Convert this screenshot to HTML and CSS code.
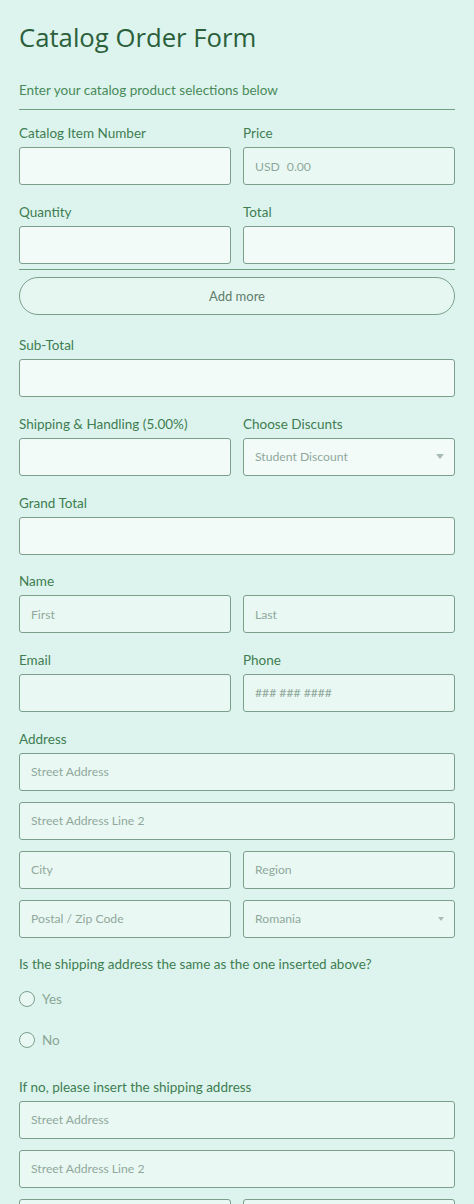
FILE: index.html
```html
<!DOCTYPE html>
<html>
<head>
<meta charset="utf-8">
<link rel="stylesheet" href="styles.css">
</head>
<body>
<div class="page">
  <header class="head">
    <h1 class="title">Catalog Order Form</h1>
    <p class="subtitle">Enter your catalog product selections below</p>
  </header>

  <div class="row two">
    <div class="field">
      <div class="label">Catalog Item Number</div>
      <div class="box white"></div>
    </div>
    <div class="field">
      <div class="label">Price</div>
      <div class="box mint"><span class="ph cur">USD</span><span class="ph">0.00</span></div>
    </div>
    <div class="field">
      <div class="label">Quantity</div>
      <div class="box white"></div>
    </div>
    <div class="field">
      <div class="label">Total</div>
      <div class="box white"></div>
    </div>
  </div>

  <div class="sep"></div>
  <div class="addmore">Add more</div>

  <div class="field single">
    <div class="label">Sub-Total</div>
    <div class="box white"></div>
  </div>

  <div class="row two">
    <div class="field">
      <div class="label">Shipping &amp; Handling (5.00%)</div>
      <div class="box white"></div>
    </div>
    <div class="field">
      <div class="label">Choose Discunts</div>
      <div class="box white select"><span class="ph">Student Discount</span><span class="caret"></span></div>
    </div>
  </div>

  <div class="field single">
    <div class="label">Grand Total</div>
    <div class="box white"></div>
  </div>

  <div class="field single">
    <div class="label">Name</div>
    <div class="pair">
      <div class="box mint"><span class="ph">First</span></div>
      <div class="box mint"><span class="ph">Last</span></div>
    </div>
  </div>

  <div class="row two">
    <div class="field">
      <div class="label">Email</div>
      <div class="box mint"></div>
    </div>
    <div class="field">
      <div class="label">Phone</div>
      <div class="box mint"><span class="ph">### ### ####</span></div>
    </div>
  </div>

  <div class="field single">
    <div class="label">Address</div>
    <div class="stack">
      <div class="box mint"><span class="ph">Street Address</span></div>
      <div class="box mint"><span class="ph">Street Address Line 2</span></div>
      <div class="pair">
        <div class="box mint"><span class="ph">City</span></div>
        <div class="box mint"><span class="ph">Region</span></div>
      </div>
      <div class="pair">
        <div class="box mint"><span class="ph">Postal / Zip Code</span></div>
        <div class="box mint select"><span class="ph">Romania</span><span class="caret small"></span></div>
      </div>
    </div>
  </div>

  <div class="field single">
    <div class="label">Is the shipping address the same as the one inserted above?</div>
    <div class="radios">
      <div class="radio"><span class="circle"></span><span class="rtext">Yes</span></div>
      <div class="radio"><span class="circle"></span><span class="rtext">No</span></div>
    </div>
  </div>

  <div class="field single">
    <div class="label">If no, please insert the shipping address</div>
    <div class="stack">
      <div class="box mint"><span class="ph">Street Address</span></div>
      <div class="box mint"><span class="ph">Street Address Line 2</span></div>
      <div class="pair">
        <div class="box mint"></div>
        <div class="box mint"></div>
      </div>
    </div>
  </div>
</div>
</body>
</html>
```

FILE: styles.css
```css
html, body {
  margin: 0;
  padding: 0;
  background: #dcf4ed;
  height: 1204px;
  overflow: hidden;
}
.page {
  padding: 0 19px;
  font-family: Lato, "Noto Sans", sans-serif;
  color: #3f7d52;
}
.head {
  padding-top: 21px;
  border-bottom: 1px solid #6f9e80;
  padding-bottom: 9px;
  margin-bottom: 13px;
}
.title {
  margin: 0;
  font-family: "Open Sans", "Noto Sans", sans-serif;
  font-weight: 400;
  font-size: 25.7px;
  line-height: 33px;
  color: #2b5f3b;
}
.subtitle {
  margin: 26px 0 0;
  font-size: 13.5px;
  line-height: 20px;
  color: #4a8a5a;
}
.row.two,
.pair {
  display: grid;
  grid-template-columns: 212px 212px;
  justify-content: space-between;
}
.field {
  margin-bottom: 16.6px;
}
.label {
  font-size: 13.5px;
  line-height: 20px;
  margin-bottom: 4px;
  color: #3f7d52;
  white-space: nowrap;
}
.box {
  box-sizing: border-box;
  height: 38px;
  border: 1px solid #7b9f8c;
  border-radius: 3px;
  display: flex;
  align-items: center;
  padding: 0 11px;
}
.box.white { background: #f3fbf9; }
.box.mint { background: #eaf8f3; }
.ph {
  font-size: 12.2px;
  color: #8fa89b;
}
.ph.cur { margin-right: 7px; }
.select { justify-content: space-between; }
.caret {
  width: 0;
  height: 0;
  border-left: 4.5px solid transparent;
  border-right: 4.5px solid transparent;
  border-top: 5px solid #a9bcb3;
  margin-right: -1px;
}
.caret.small {
  border-left-width: 3.5px;
  border-right-width: 3.5px;
  border-top-width: 4px;
}
.row.two .field:nth-child(1),
.row.two .field:nth-child(2) { margin-bottom: 17px; }
.row.two .field:nth-child(3),
.row.two .field:nth-child(4) { margin-bottom: 0; }
.sep {
  height: 1px;
  background: #6f9e80;
  margin-top: 5px;
  margin-bottom: 7px;
}
.addmore {
  box-sizing: border-box;
  height: 38px;
  border: 1px solid #7b9f8c;
  border-radius: 19px;
  background: #e6f7f1;
  display: flex;
  align-items: center;
  justify-content: center;
  font-size: 13px;
  color: #5f7d6c;
  margin-bottom: 20px;
}
.stack {
  display: flex;
  flex-direction: column;
  gap: 11px;
}
.radios {
  display: flex;
  flex-direction: column;
  gap: 25px;
  padding-top: 13px;
  padding-bottom: 12px;
}
.radio {
  display: flex;
  align-items: center;
  height: 16px;
}
.circle {
  box-sizing: border-box;
  width: 16px;
  height: 16px;
  border: 1px solid #7b9f8c;
  border-radius: 50%;
  background: #eaf8f3;
  margin-right: 7px;
}
.rtext {
  font-size: 13.5px;
  color: #8aa596;
}
```
